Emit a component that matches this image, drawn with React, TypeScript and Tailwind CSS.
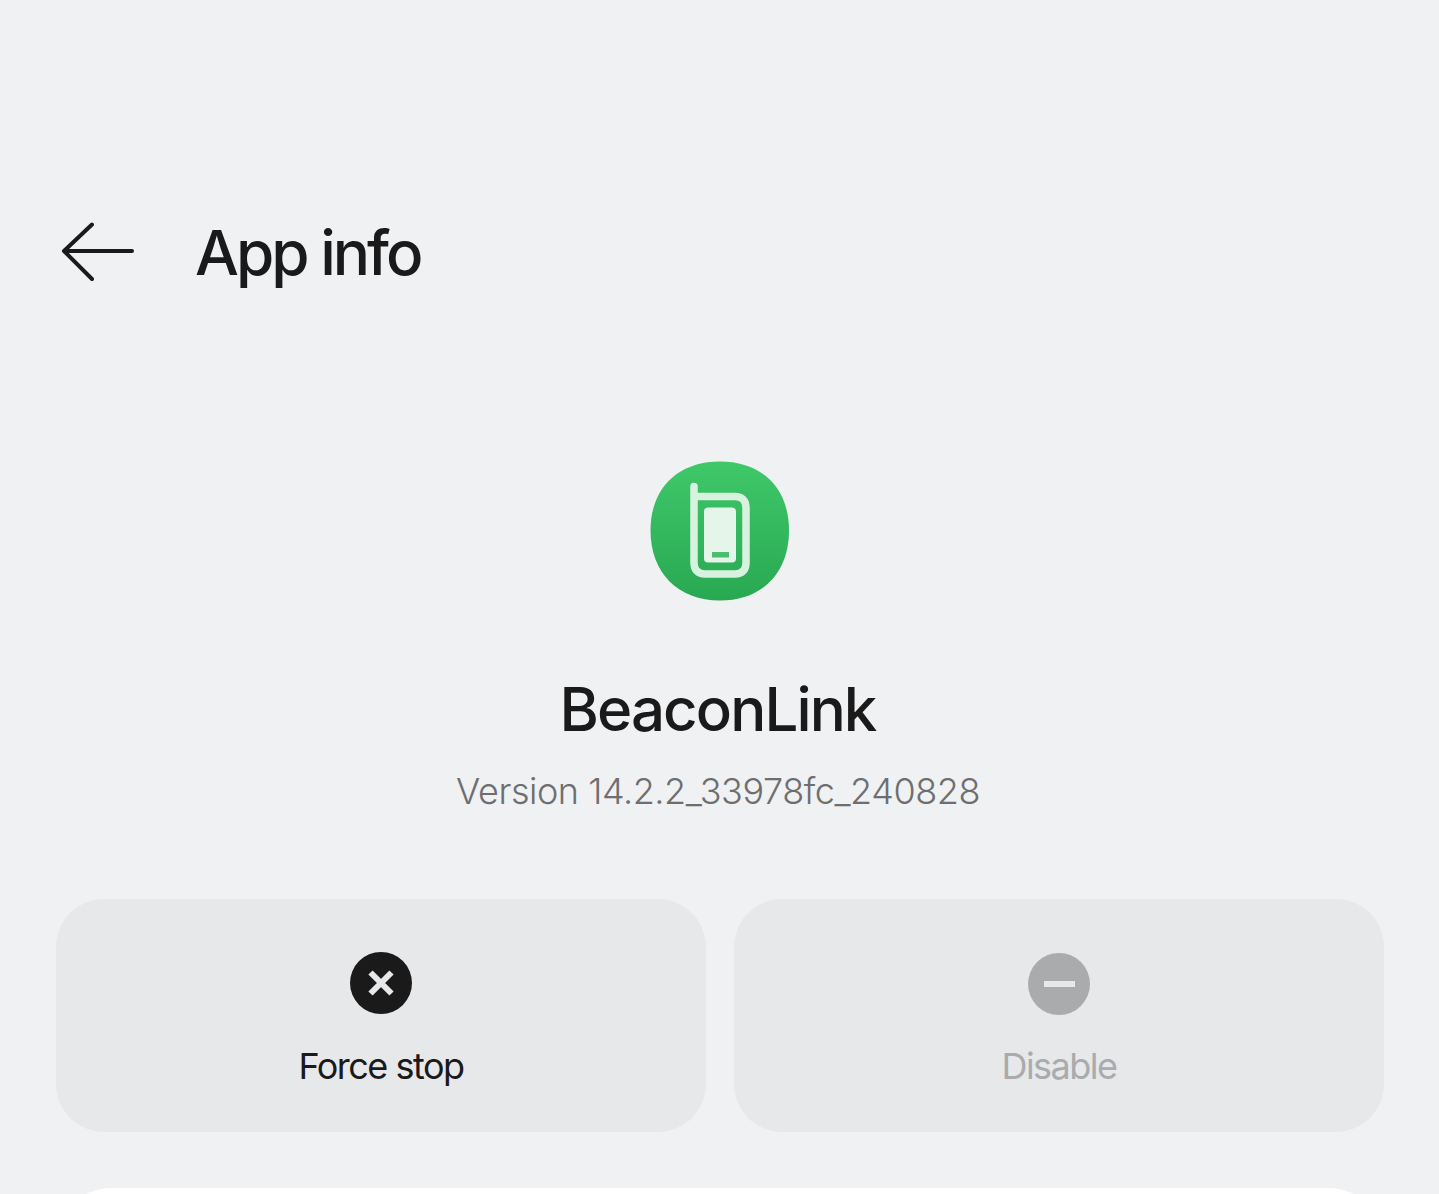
import React from "react";

const font = { fontFamily: "Inter, 'Noto Sans', sans-serif" };

const AppIcon = () => (
  <svg width="140" height="140" viewBox="0 0 140 140" fill="none">
    <defs>
      <linearGradient id="iconBg" x1="0" y1="0" x2="0" y2="1">
        <stop offset="0" stopColor="#3fc86a" />
        <stop offset="1" stopColor="#29a852" />
      </linearGradient>
    </defs>
    <path
      d="M70 0.5C112 0.5 139 27 139 69.5C139 112 112 139.5 70 139.5C28 139.5 0.5 112 0.5 69.5C0.5 27 28 0.5 70 0.5Z"
      fill="url(#iconBg)"
    />
    <path
      d="M44 25.5V102C44 109 48 113 55 113H85C92 113 96 109 96 102V46.5C96 39.5 92 35.5 85 35.5H44"
      stroke="#d8f2e0"
      strokeWidth="7.5"
      strokeLinecap="round"
      strokeLinejoin="round"
      fill="none"
    />
    <rect x="54" y="46.5" width="32" height="55" rx="4" fill="#e5f5ea" />
    <rect x="62" y="91" width="17" height="5.5" fill="#4cbc70" />
  </svg>
);

const ActionButton = ({ label, disabled, children }: { label: string; disabled?: boolean; children: React.ReactNode }) => (
  <button className="flex h-[233px] flex-col items-center rounded-[48px] bg-[#e7e8ea] pt-[53px]">
    {children}
    <span
      className={`mt-[30px] text-[36px] leading-[44px] tracking-[-1.5px] ${disabled ? "text-[#a9abad]" : "text-[#1a1a1a]"}`}
    >
      {label}
    </span>
  </button>
);

export default function App() {
  return (
    <div className="h-[1194px] w-full overflow-hidden bg-[#eff1f3] pl-[56px] pr-[55px]" style={font}>
      {/* Header */}
      <div className="flex items-center pt-[216px]">
        <svg width="74" height="62" viewBox="0 0 74 62" fill="none" className="ml-[5px]">
          <path
            d="M31 2.5L3 29L71 29M3 29L31 57"
            stroke="#1a1a1a"
            strokeWidth="4"
            strokeLinecap="round"
            strokeLinejoin="round"
          />
        </svg>
        <h1 className="ml-[60px] text-[62px] leading-[74px] font-[450] tracking-[-3px] text-[#1a1a1a]">App info</h1>
      </div>

      {/* App summary */}
      <div className="flex flex-col items-center pt-[171px]">
        <AppIcon />
        <p className="mt-[70px] mr-[5px] text-[60px] leading-[76px] font-medium tracking-[-1.9px] text-[#1a1a1a]">BeaconLink</p>
        <p className="mt-[21px] mr-[4px] text-[36px] leading-[46px] font-[350] tracking-[-0.45px] text-[#6e6e70]">
          Version 14.2.2_33978fc_240828
        </p>
      </div>

      {/* Actions */}
      <div className="mt-[85px] grid grid-cols-2 gap-[28px]">
        <ActionButton label="Force stop">
          <span className="flex h-[62px] w-[62px] items-center justify-center rounded-full bg-[#1a1a1a]">
            <svg width="30" height="30" viewBox="0 0 30 30" fill="none">
              <path d="M4.5 4.5L25.5 25.5M25.5 4.5L4.5 25.5" stroke="#e7e8ea" strokeWidth="6" />
            </svg>
          </span>
        </ActionButton>
        <ActionButton label="Disable" disabled>
          <span className="flex h-[62px] w-[62px] translate-y-px items-center justify-center rounded-full bg-[#a9abad]">
            <span className="h-[6px] w-[31px] bg-[#e7e8ea]" />
          </span>
        </ActionButton>
      </div>

      {/* Next card */}
      <div className="mt-[56px] h-[120px] rounded-[56px] bg-white" />
    </div>
  );
}
